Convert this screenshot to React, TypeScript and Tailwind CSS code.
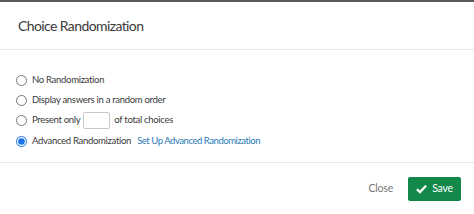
export default function App() {
  return (
    <div className="w-[474px] h-[214px] bg-white border-t-2 border-[#5a5a5a] flex flex-col text-[#3a3a3a] font-['Lato',sans-serif]">
      <div className="h-[48px] flex items-center px-[18px] border-b border-[#e6e6e6]">
        <h2 className="text-[14px] tracking-[-0.6px]">Choice Randomization</h2>
      </div>
      <div className="h-[113px] flex flex-col pt-[20px] px-[16px] text-[9.5px] tracking-[-0.3px] border-b border-[#e6e6e6]">
        <label className="flex items-center gap-[5px] h-[20px]">
          <input type="radio" name="r" className="w-[11px] h-[11px] m-0 accent-[#1a73e8]" />
          No Randomization
        </label>
        <label className="flex items-center gap-[5px] h-[20px]">
          <input type="radio" name="r" className="w-[11px] h-[11px] m-0 accent-[#1a73e8]" />
          Display answers in a random order
        </label>
        <label className="flex items-center gap-[5px] h-[21px]">
          <input type="radio" name="r" className="w-[11px] h-[11px] m-0 accent-[#1a73e8]" />
          Present only
          <span className="w-[27px] h-[17px] border border-[#c8c8c8] rounded-[2px] ml-[-2px] mr-[-1px]" />
          of total choices
        </label>
        <label className="flex items-center gap-[5px] h-[20px]">
          <input type="radio" name="r" defaultChecked className="w-[11px] h-[11px] m-0 accent-[#1a73e8]" />
          Advanced Randomization
          <a className="ml-[1px] text-[#2a7ab8] tracking-[-0.45px]">Set Up Advanced Randomization</a>
        </label>
      </div>
      <div className="flex-1 flex items-center justify-end pr-[13px] gap-[15px] text-[10.5px] tracking-[-0.2px]">
        <span className="text-[#777]">Close</span>
        <button className="h-[24px] w-[53px] rounded-[2px] bg-[#12884a] text-white flex items-center justify-center gap-[5px]">
          <svg width="11" height="10" viewBox="0 0 12 10">
            <path d="M1 5.2 L4.3 8.4 L11 1.5" fill="none" stroke="white" strokeWidth="2.4" />
          </svg>
          Save
        </button>
      </div>
    </div>
  );
}
